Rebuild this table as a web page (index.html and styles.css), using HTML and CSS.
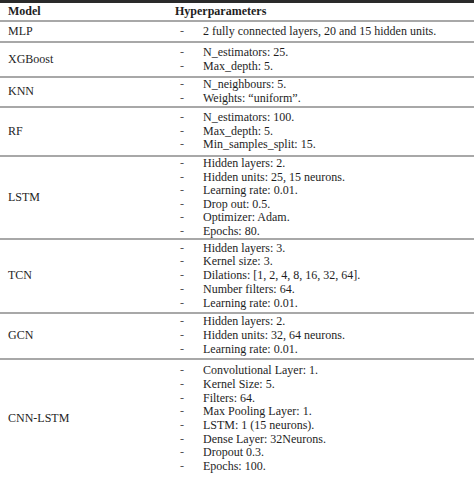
FILE: index.html
```html
<!DOCTYPE html>
<html>
<head>
<meta charset="utf-8">
<link rel="stylesheet" href="styles.css">
</head>
<body>
<table class="hp">
  <thead>
    <tr><th class="model">Model</th><th class="params">Hyperparameters</th></tr>
  </thead>
  <tbody>
    <tr class="r1"><td class="model">MLP</td><td class="params"><ul>
      <li>2 fully connected layers, 20 and 15 hidden units.</li></ul></td></tr>
    <tr class="r2"><td class="model">XGBoost</td><td class="params"><ul>
      <li>N_estimators: 25.</li><li>Max_depth: 5.</li></ul></td></tr>
    <tr class="r3"><td class="model">KNN</td><td class="params"><ul>
      <li>N_neighbours: 5.</li><li>Weights: “uniform”.</li></ul></td></tr>
    <tr class="r4"><td class="model">RF</td><td class="params"><ul>
      <li>N_estimators: 100.</li><li>Max_depth: 5.</li><li>Min_samples_split: 15.</li></ul></td></tr>
    <tr class="r5"><td class="model">LSTM</td><td class="params"><ul>
      <li>Hidden layers: 2.</li><li>Hidden units: 25, 15 neurons.</li><li>Learning rate: 0.01.</li><li>Drop out: 0.5.</li><li>Optimizer: Adam.</li><li>Epochs: 80.</li></ul></td></tr>
    <tr class="r6"><td class="model">TCN</td><td class="params"><ul>
      <li>Hidden layers: 3.</li><li>Kernel size: 3.</li><li>Dilations: [1, 2, 4, 8, 16, 32, 64].</li><li>Number filters: 64.</li><li>Learning rate: 0.01.</li></ul></td></tr>
    <tr class="r7"><td class="model">GCN</td><td class="params"><ul>
      <li>Hidden layers: 2.</li><li>Hidden units: 32, 64 neurons.</li><li>Learning rate: 0.01.</li></ul></td></tr>
    <tr class="r8"><td class="model">CNN-LSTM</td><td class="params"><ul>
      <li>Convolutional Layer: 1.</li><li>Kernel Size: 5.</li><li>Filters: 64.</li><li>Max Pooling Layer: 1.</li><li>LSTM: 1 (15 neurons).</li><li>Dense Layer: 32Neurons.</li><li>Dropout 0.3.</li><li>Epochs: 100.</li></ul></td></tr>
  </tbody>
</table>
</body>
</html>
```
FILE: styles.css
```css
html, body {
  margin: 0;
  padding: 0;
  background: #ffffff;
}
body {
  font-family: "Liberation Serif", "Times New Roman", serif;
  font-size: 12px;
  color: #1e1e1e;
  width: 474px;
  height: 477px;
  overflow: hidden;
}
.hp {
  width: 474px;
  border-collapse: collapse;
  border-top: 3px solid #2a2a2a;
  border-bottom: 5px solid #e8e8e8;
}
.hp th, .hp td {
  padding: 0;
  text-align: left;
  vertical-align: middle;
  line-height: 13.7px;
}
.hp th {
  font-weight: bold;
  height: 17px;
  border-bottom: 2px solid #a8a8a8;
}
.hp td {
  border-bottom: 2px solid #a8a8a8;
}
.hp tr.r1 td { height: 19px; }
.hp tr.r2 td { height: 33px; }
.hp tr.r3 td { height: 28px; }
.hp tr.r4 td { height: 47px; }
.hp tr.r5 td { height: 80px; line-height: 13.5px; }
.hp tr.r6 td { height: 72px; }
.hp tr.r7 td { height: 44px; }
.hp tr.r8 td { height: 118px; border-bottom: none; }
.model {
  width: 167px;
  padding-left: 8px !important;
}
.params ul {
  list-style: none;
  margin: 0;
  padding: 0;
}
.params li {
  display: flex;
}
.params li::before {
  content: "-";
  width: 23px;
  padding-left: 5px;
  color: #555;
  flex: none;
}
```
